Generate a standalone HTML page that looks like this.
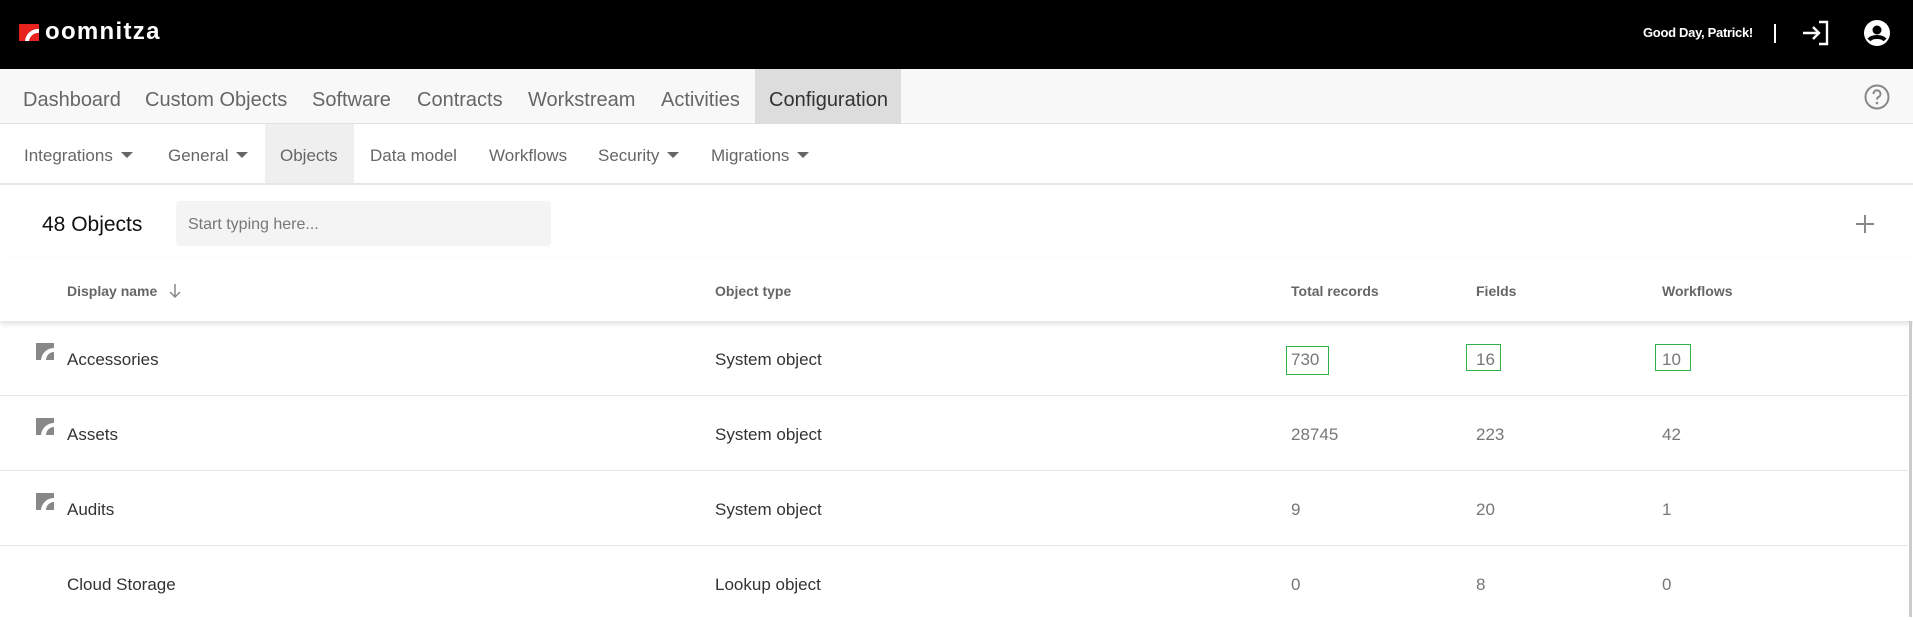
<!DOCTYPE html>
<html><head><meta charset="utf-8"><style>
*{margin:0;padding:0;box-sizing:border-box}
body{width:1913px;height:617px;overflow:hidden;background:#fff;font-family:"Liberation Sans",Arial,sans-serif;position:relative}
.a{position:absolute;white-space:nowrap}
.top{position:absolute;left:0;top:0;width:1913px;height:69px;background:#000}
.nav{position:absolute;left:0;top:69px;width:1913px;height:55px;background:#f8f8f8;border-bottom:1px solid #e2e2e2}
.nav .a{font-size:20px;color:#666;top:20px}
.sub{position:absolute;left:0;top:124px;width:1913px;height:61px;background:#fff;border-bottom:2px solid #e6e6e6}
.sub .a{font-size:17px;color:#666;top:22px}
.car{display:inline-block;width:0;height:0;border-left:6px solid transparent;border-right:6px solid transparent;border-top:6px solid #666;vertical-align:middle;margin-left:8px;margin-top:-3px}
.th{font-size:14px;font-weight:bold;color:#666;top:283px}
.row{position:absolute;left:0;width:1908px;height:75px;border-bottom:1px solid #e6e6e6}
.row .a{top:29px;font-size:17px}
.nm{left:67px;color:#333}.ty{left:715px;color:#333}
.n1{left:1291px;color:#777}.n2{left:1476px;color:#777}.n3{left:1662px;color:#777}
.ic{position:absolute;left:36px;top:22px}
.gb{position:absolute;border:1px solid #2db34a}
</style></head><body>
<div class="top">
 <div class="a" style="left:19px;top:24px;width:20px;height:17px;background:#e8231f;overflow:hidden">
  <div style="position:absolute;left:6px;top:5px;width:26px;height:26px;border-radius:50%;border:4px solid #fff;border-right-color:transparent;border-bottom-color:transparent"></div>
 </div>
 <div class="a" style="left:45px;top:18px;font-size:24px;font-weight:bold;color:#fff;letter-spacing:1.3px">oomnitza</div>
 <div class="a" style="left:1643px;top:25px;font-size:13px;font-weight:bold;color:#fff;letter-spacing:-0.3px">Good Day, Patrick!</div>
 <div class="a" style="left:1774px;top:24px;width:2px;height:19px;background:#fff"></div>
 <svg class="a" style="left:1801px;top:20px" width="30" height="26" viewBox="0 0 30 26"><path d="M2 13H18M12 7l6 6-6 6M18 2h8v22h-8" fill="none" stroke="#fff" stroke-width="2.4"/></svg>
 <svg class="a" style="left:1864px;top:20px" width="26" height="26" viewBox="0 0 26 26"><circle cx="13" cy="13" r="13" fill="#fff"/><circle cx="13" cy="10" r="4.5" fill="#000"/><path d="M5 20c3-4 13-4 16 0" fill="none" stroke="#000" stroke-width="4"/></svg>
</div>
<div class="nav">
 <div class="a" style="left:23px">Dashboard</div>
 <div class="a" style="left:145px">Custom Objects</div>
 <div class="a" style="left:312px">Software</div>
 <div class="a" style="left:417px">Contracts</div>
 <div class="a" style="left:528px">Workstream</div>
 <div class="a" style="left:661px">Activities</div>
 <div class="a" style="left:755px;top:0;width:146px;height:55px;background:#ddd"></div>
 <div class="a" style="left:769px;color:#333">Configuration</div>
 <svg class="a" style="left:1864px;top:15px" width="26" height="26" viewBox="0 0 26 26"><circle cx="13" cy="13" r="11.5" fill="none" stroke="#888" stroke-width="2"/><path d="M9.5 10a3.5 3.5 0 1 1 5 3c-1.2.7-1.5 1.3-1.5 2.5" fill="none" stroke="#888" stroke-width="2"/><circle cx="13" cy="19" r="1.3" fill="#888"/></svg>
</div>
<div class="sub">
 <div class="a" style="left:24px">Integrations<span class="car"></span></div>
 <div class="a" style="left:168px">General<span class="car"></span></div>
 <div class="a" style="left:265px;top:0;width:89px;height:59px;background:#efefef"></div>
 <div class="a" style="left:280px">Objects</div>
 <div class="a" style="left:370px">Data model</div>
 <div class="a" style="left:489px">Workflows</div>
 <div class="a" style="left:598px">Security<span class="car"></span></div>
 <div class="a" style="left:711px">Migrations<span class="car"></span></div>
</div>
<div class="a" style="left:42px;top:213px;font-size:21px;color:#111">48 Objects</div>
<div class="a" style="left:176px;top:201px;width:375px;height:45px;background:#f4f4f4;border-radius:4px"></div>
<div class="a" style="left:188px;top:216px;font-size:16px;color:#777">Start typing here...</div>
<svg class="a" style="left:1855px;top:214px" width="20" height="20" viewBox="0 0 20 20"><path d="M10 1v18M1 10h18" stroke="#888" stroke-width="2"/></svg>
<div class="a" style="left:0;top:258px;width:1913px;height:63px;background:#fff;box-shadow:0 3px 5px rgba(0,0,0,0.12)"></div>
<div class="a th" style="left:67px">Display name</div>
<svg class="a" style="left:168px;top:283px" width="14" height="16" viewBox="0 0 14 16"><path d="M7 1v13M2 9l5 5 5-5" fill="none" stroke="#888" stroke-width="1.5"/></svg>
<div class="a th" style="left:715px">Object type</div>
<div class="a th" style="left:1291px">Total records</div>
<div class="a th" style="left:1476px">Fields</div>
<div class="a th" style="left:1662px">Workflows</div>
<div class="a" style="left:1909px;top:321px;width:3px;height:296px;background:#ccc"></div>
<div class="row" style="top:321px">
 <svg class="ic" width="18" height="17" viewBox="0 0 18 17"><path d="M0 0h18v5A13 13 0 0 0 5 17H0z" fill="#888"/><path d="M10 17a8 8 0 0 1 8-8v8z" fill="#888"/></svg>
 <div class="a nm">Accessories</div><div class="a ty">System object</div>
 <div class="a n1">730</div><div class="a n2">16</div><div class="a n3">10</div>
 <div class="gb" style="left:1286px;top:25px;width:43px;height:29px"></div>
 <div class="gb" style="left:1466px;top:23px;width:35px;height:27px"></div>
 <div class="gb" style="left:1655px;top:23px;width:36px;height:27px"></div>
</div>
<div class="row" style="top:396px">
 <svg class="ic" width="18" height="17" viewBox="0 0 18 17"><path d="M0 0h18v5A13 13 0 0 0 5 17H0z" fill="#888"/><path d="M10 17a8 8 0 0 1 8-8v8z" fill="#888"/></svg>
 <div class="a nm">Assets</div><div class="a ty">System object</div>
 <div class="a n1">28745</div><div class="a n2">223</div><div class="a n3">42</div>
</div>
<div class="row" style="top:471px">
 <svg class="ic" width="18" height="17" viewBox="0 0 18 17"><path d="M0 0h18v5A13 13 0 0 0 5 17H0z" fill="#888"/><path d="M10 17a8 8 0 0 1 8-8v8z" fill="#888"/></svg>
 <div class="a nm">Audits</div><div class="a ty">System object</div>
 <div class="a n1">9</div><div class="a n2">20</div><div class="a n3">1</div>
</div>
<div class="row" style="top:546px;border-bottom:none">
 <div class="a nm">Cloud Storage</div><div class="a ty">Lookup object</div>
 <div class="a n1">0</div><div class="a n2">8</div><div class="a n3">0</div>
</div>
</body></html>
